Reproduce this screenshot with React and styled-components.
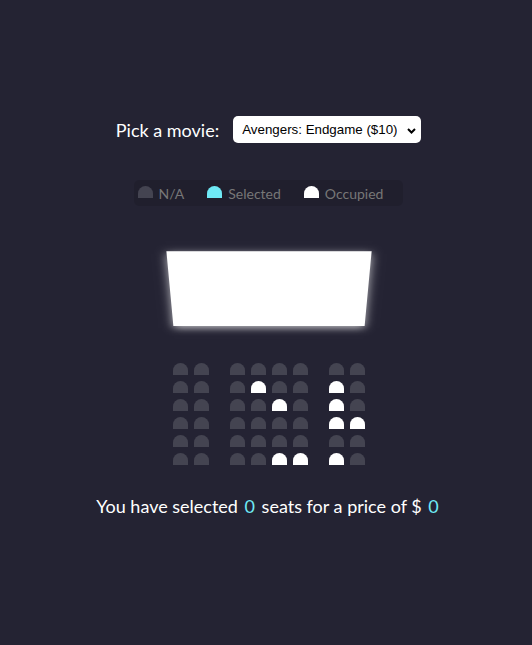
import styled, { createGlobalStyle } from "styled-components";

const GlobalStyle = createGlobalStyle`
  * { box-sizing: border-box; }
  html, body {
    margin: 0;
    background-color: #242333;
  }
  body {
    color: #fff;
    font-family: Lato, "Open Sans", sans-serif;
    font-size: 18px;
  }
`;

const Page = styled.main`
  min-height: 645px;
  display: flex;
  flex-direction: column;
  align-items: center;
  padding-top: 116px;
  padding-left: 5px;
`;

const MovieContainer = styled.div`
  display: flex;
  align-items: center;
  height: 27px;
`;

const Label = styled.label`
  font-size: 18px;
`;

const SelectWrap = styled.div`
  position: relative;
  margin-left: 14px;
`;

const Select = styled.select`
  appearance: none;
  width: 188px;
  height: 27px;
  background-color: #fff;
  border: 0;
  border-radius: 5px;
  font-family: "Liberation Sans", Arial, sans-serif;
  font-size: 13.33px;
  color: #000;
  padding: 0 24px 0 9px;
  outline: none;
`;

const Chevron = styled.svg`
  position: absolute;
  right: 5px;
  top: 12px;
  pointer-events: none;
`;

const Showcase = styled.ul`
  display: flex;
  list-style: none;
  margin: 37px 0 0;
  padding: 2px 10px 4px 1px;
  background: rgba(0, 0, 0, 0.1);
  border-radius: 5px;
  color: #777;
`;

const LegendItem = styled.li`
  display: flex;
  align-items: center;
  margin: 0 10px;

  &:first-child {
    margin-left: 0;
  }
`;

const LegendText = styled.small`
  font-size: 14px;
  margin: 3px 0 0 3px;
`;

const seatColors = {
  free: "#444451",
  selected: "#6feaf6",
  occupied: "#fff",
};

const Seat = styled.div`
  width: 15px;
  height: 12px;
  margin: 3px;
  background-color: ${({ $status }) => seatColors[$status]};
  border-top-left-radius: 10px;
  border-top-right-radius: 10px;
`;

const Row = styled.div`
  display: flex;

  & > div:nth-of-type(2) {
    margin-right: 18px;
  }
  & > div:nth-last-of-type(2) {
    margin-left: 18px;
  }
`;

const Theatre = styled.div`
  perspective: 1000px;
  margin-top: 19px;
`;

const Screen = styled.div`
  background-color: #fff;
  height: 100px;
  width: 100%;
  margin: 15px 0 20px;
  transform: rotateX(-45deg);
  box-shadow: 0 3px 10px rgba(255, 255, 255, 0.7);
`;

const Summary = styled.p`
  margin: 28px 0 0;
  font-size: 18px;
  line-height: 1.2;
`;

const Count = styled.span`
  color: #6feaf6;
  margin: 0 2px;
`;

const occupied = [[], [3, 6], [4, 6], [6, 7], [], [4, 5, 6]];

function App() {
  return (
    <>
      <GlobalStyle />
      <Page>
        <MovieContainer>
          <Label htmlFor="movie">Pick a movie:</Label>
          <SelectWrap>
            <Select id="movie" defaultValue="10">
              <option value="10">Avengers: Endgame ($10)</option>
              <option value="12">Joker ($12)</option>
              <option value="8">Toy Story 4 ($8)</option>
              <option value="9">The Lion King ($9)</option>
            </Select>
            <Chevron width="9" height="6" viewBox="0 0 9 6">
              <path d="M1 1 L4.5 4.5 L8 1" fill="none" stroke="#000" strokeWidth="2" />
            </Chevron>
          </SelectWrap>
        </MovieContainer>

        <Showcase>
          <LegendItem>
            <Seat $status="free" />
            <LegendText>N/A</LegendText>
          </LegendItem>
          <LegendItem>
            <Seat $status="selected" />
            <LegendText>Selected</LegendText>
          </LegendItem>
          <LegendItem>
            <Seat $status="occupied" />
            <LegendText>Occupied</LegendText>
          </LegendItem>
        </Showcase>

        <Theatre>
          <Screen />
          {occupied.map((taken, r) => (
            <Row key={r}>
              {Array.from({ length: 8 }, (_, i) => (
                <Seat key={i} $status={taken.includes(i) ? "occupied" : "free"} />
              ))}
            </Row>
          ))}
        </Theatre>

        <Summary>
          You have selected <Count>0</Count> seats for a price of $ <Count>0</Count>
        </Summary>
      </Page>
    </>
  );
}

export default App;
